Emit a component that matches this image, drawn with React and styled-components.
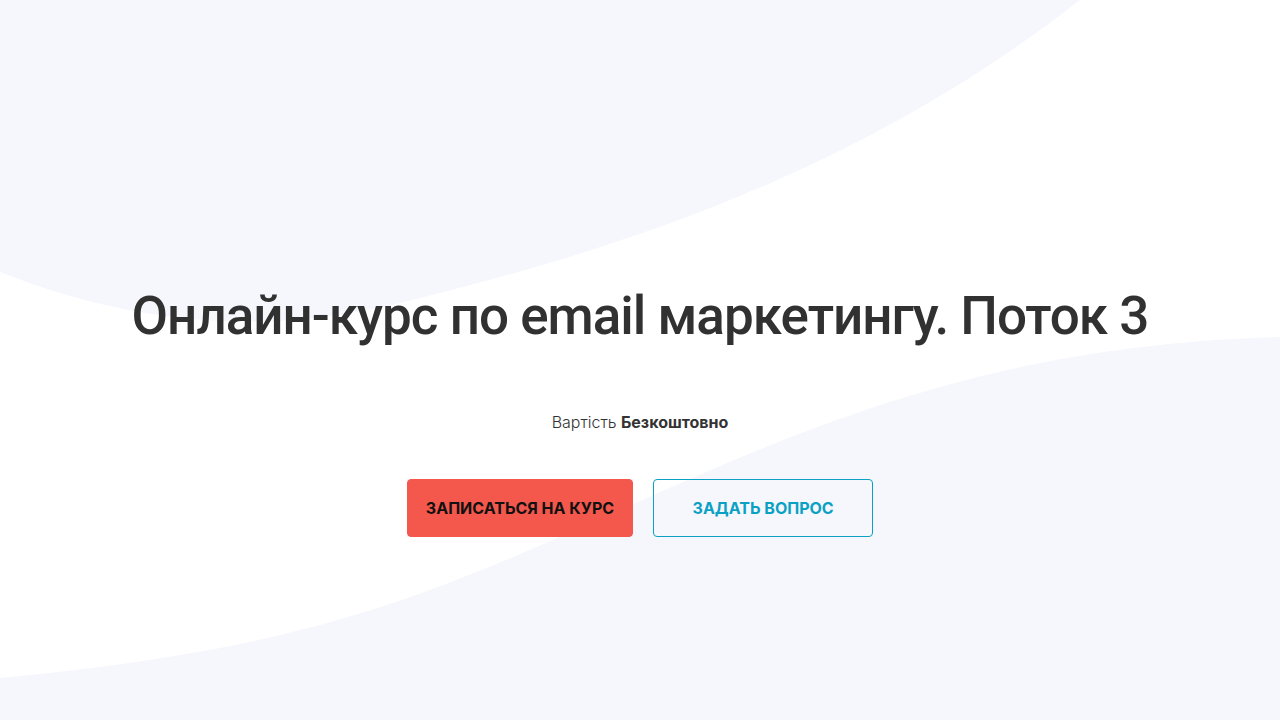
import React from "react";
import styled, { createGlobalStyle } from "styled-components";

const GlobalStyle = createGlobalStyle`
  html, body {
    margin: 0;
    padding: 0;
    background: #ffffff;
    font-family: Inter, "Noto Sans", "Liberation Sans", sans-serif;
    color: #333333;
  }
  * {
    box-sizing: border-box;
  }
`;

export default function App() {
  return (
    <>
      <GlobalStyle />
      <Hero>
        <Waves viewBox="0 0 1280 720" preserveAspectRatio="none" aria-hidden="true">
          <path
            d="M0,0 L1080,0 C850,180 600,254 400,303 Q200,352 0,272 Z"
            fill="#f6f7fc"
          />
          <path
            d="M0,678 C300,650 420,600 620,510 S1000,345 1280,337 L1280,720 L0,720 Z"
            fill="#f6f7fc"
          />
        </Waves>
        <Content>
          <Title>Онлайн-курс по email маркетингу. Поток 3</Title>
          <Price>
            Вартість <strong>Безкоштовно</strong>
          </Price>
          <Actions>
            <Button type="button">Записаться на курс</Button>
            <Button type="button" $outline>
              Задать вопрос
            </Button>
          </Actions>
        </Content>
      </Hero>
    </>
  );
}

const Hero = styled.section`
  position: relative;
  height: 720px;
  overflow: hidden;
  background: #ffffff;
`;

const Waves = styled.svg`
  position: absolute;
  inset: 0;
  width: 100%;
  height: 100%;
  z-index: 0;
`;

const Content = styled.div`
  position: relative;
  z-index: 1;
  display: flex;
  flex-direction: column;
  align-items: center;
  padding-top: 283px;
`;

const Title = styled.h1`
  margin: 0;
  font-family: Roboto, Inter, sans-serif;
  font-size: 53px;
  line-height: 67px;
  font-weight: 500;
  letter-spacing: -1px;
  color: #313131;
  text-align: center;
`;

const Price = styled.p`
  margin: 60px 0 0;
  font-size: 16px;
  line-height: 24px;
  font-weight: 300;
  color: #333333;

  strong {
    font-weight: 700;
  }
`;

const Actions = styled.div`
  display: flex;
  gap: 20px;
  margin-top: 45px;
`;

const Button = styled.button`
  height: 58px;
  min-width: 220px;
  padding: 0 18px;
  border-radius: 4px;
  border: 1px solid ${(p) => (p.$outline ? "#0aa1c4" : "#f4574b")};
  background: ${(p) => (p.$outline ? "transparent" : "#f4574b")};
  color: ${(p) => (p.$outline ? "#0aa1c4" : "#111111")};
  font-family: inherit;
  font-size: 16px;
  font-weight: 700;
  text-transform: uppercase;
  letter-spacing: 0;
  cursor: pointer;
`;
